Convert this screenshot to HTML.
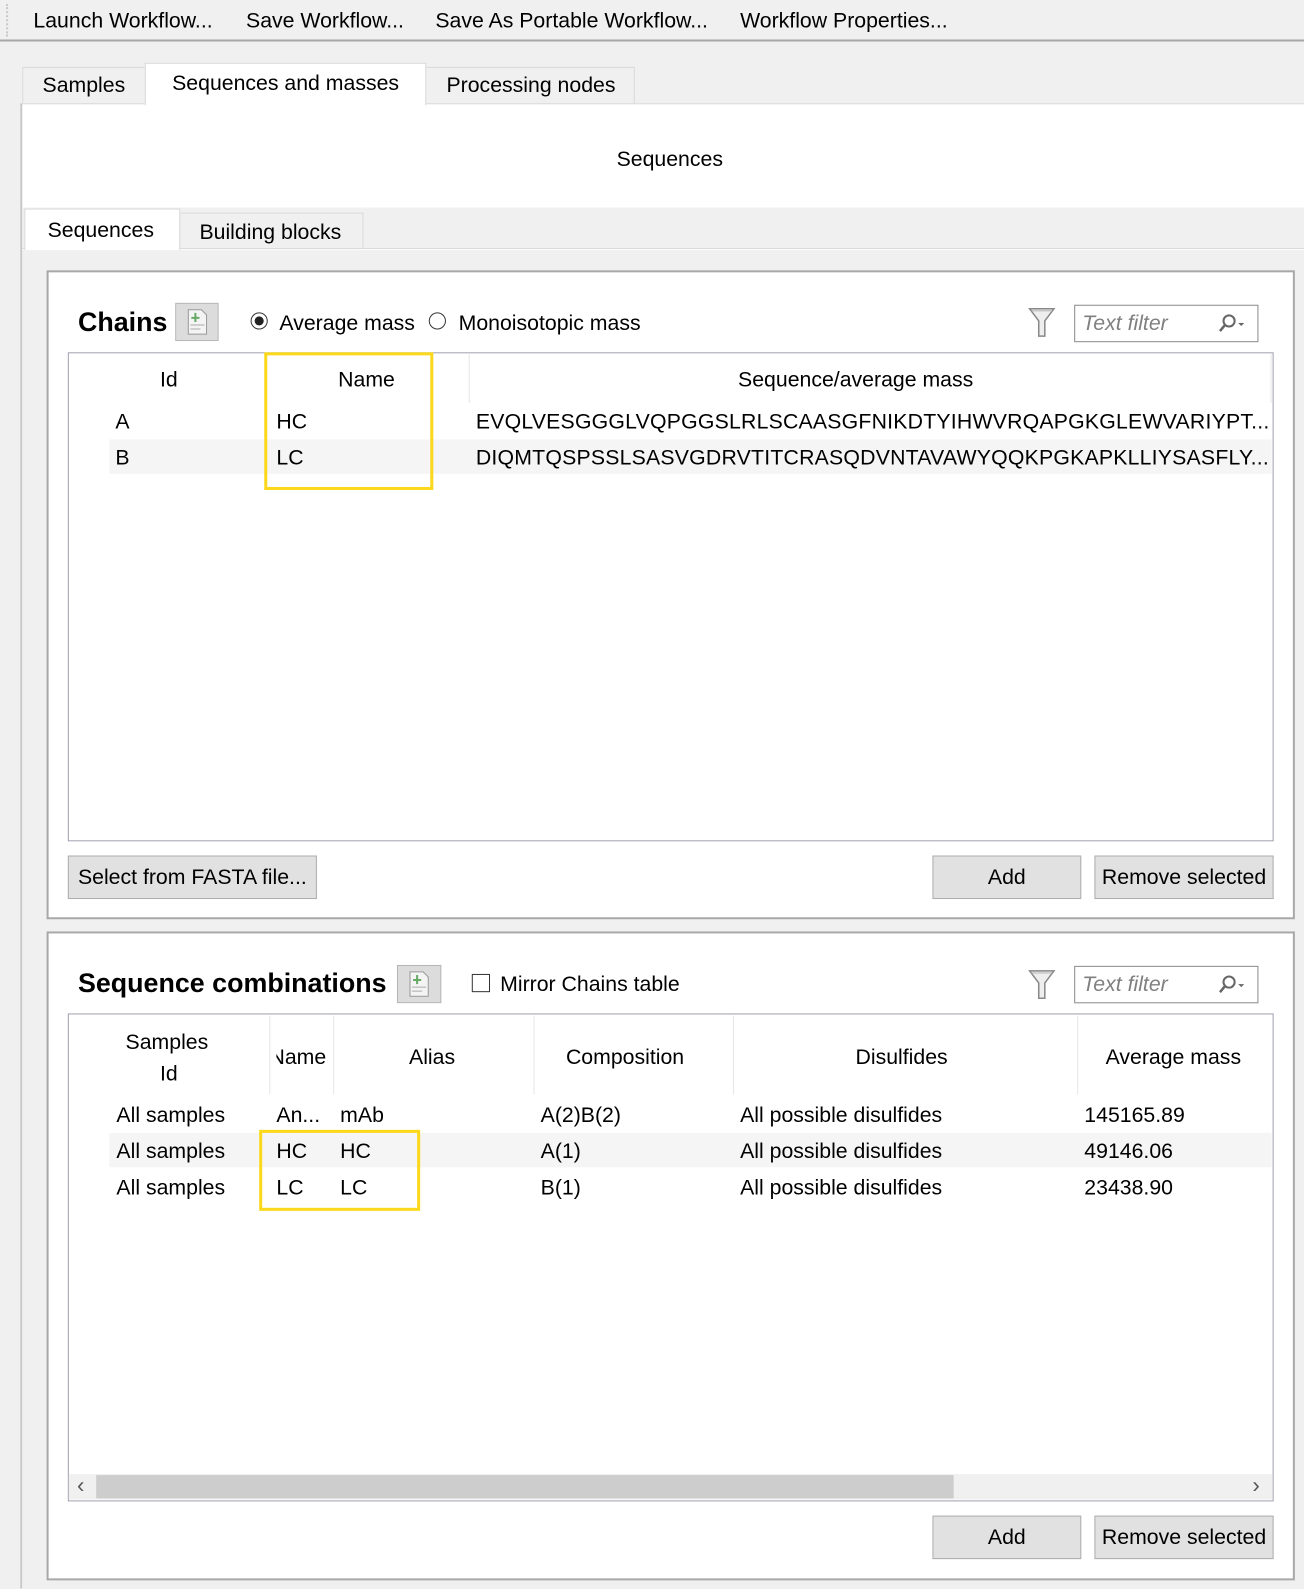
<!DOCTYPE html>
<html><head><meta charset="utf-8"><style>
*{box-sizing:border-box;margin:0;padding:0}
body{width:1304px;height:1588px;overflow:hidden;background:#f0f0f0;font-family:"Liberation Sans",sans-serif;color:#000}
#w{position:absolute;left:0;top:0;width:1288px;height:1569px;transform:scale(1.01242);transform-origin:0 0;background:#f0f0f0}
.a{position:absolute;white-space:nowrap}
.t{font-size:21px}
.btn{position:absolute;background:#e1e1e1;border:1px solid #adadad;font-size:21px;display:flex;align-items:center;justify-content:center}
.yb{position:absolute;border:3px solid #fbd81c}
.hs{position:absolute;width:1px;background:#e6e6e6}
.filt{position:absolute;background:#fff;border:1px solid #8a8a8a;width:182px;height:37px}
.filt span{position:absolute;left:7px;top:6px;font-style:italic;color:#808080;font-size:21px}
.bt{position:absolute;white-space:nowrap;font-size:26.5px;font-weight:bold}
</style></head><body><div id="w">
<div class="a" style="left:0;top:0;width:1288px;height:41px;border-bottom:2px solid #a8a8a8;background:#f0f0f0"></div>
<div class="a" style="left:6px;top:4px;width:2px;height:32px;border-left:2px dotted #c8c8c8"></div>
<div class="a t" style="left:33px;top:9px">Launch Workflow...</div>
<div class="a t" style="left:243px;top:9px">Save Workflow...</div>
<div class="a t" style="left:430px;top:9px">Save As Portable Workflow...</div>
<div class="a t" style="left:731px;top:9px">Workflow Properties...</div>
<div class="a" style="left:22px;top:66px;width:122px;height:37px;border:1px solid #d9d9d9;background:#f0f0f0"></div>
<div class="a t" style="left:42px;top:73px">Samples</div>
<div class="a" style="left:420px;top:66px;width:207px;height:37px;border:1px solid #d9d9d9;background:#f0f0f0"></div>
<div class="a t" style="left:441px;top:73px">Processing nodes</div>
<div class="a" style="left:20px;top:102px;width:1268px;height:1467px;background:#fff;border-left:2px solid #c8c8c8;border-top:1px solid #d9d9d9"></div>
<div class="a" style="left:143px;top:62px;width:278px;height:42px;background:#fff;border:1px solid #d9d9d9;border-bottom:none"></div>
<div class="a t" style="left:170px;top:71px">Sequences and masses</div>
<div class="a t" style="left:609px;top:146px">Sequences</div>
<div class="a" style="left:22px;top:205px;width:1266px;height:41px;background:#f0f0f0;border-bottom:1px solid #d9d9d9"></div>
<div class="a" style="left:177px;top:210px;width:182px;height:36px;border:1px solid #d9d9d9;background:#f0f0f0"></div>
<div class="a t" style="left:197px;top:218px">Building blocks</div>
<div class="a" style="left:24px;top:206px;width:154px;height:41px;background:#fff;border:1px solid #d9d9d9;border-bottom:none"></div>
<div class="a t" style="left:47px;top:216px">Sequences</div>
<div class="a" style="left:22px;top:247px;width:1266px;height:1322px;background:#f0f0f0"></div>
<div class="a" style="left:46px;top:267px;width:1233px;height:641px;background:#fff;border:2px solid #a8a8a8"></div>
<div class="bt" style="left:77px;top:303px">Chains</div>
<svg class="a" style="left:173px;top:299px" width="43" height="38"><rect x="0.5" y="0.5" width="42" height="37" fill="#dcdcdc" stroke="#b0b0b0"/><path d="M13 7h13l5 5v19H13z" fill="#f4f4f4" stroke="#999"/><path d="M20 10v9m-4-4h8" stroke="#6a6" stroke-width="2"/><path d="M15 22h14M15 26h10" stroke="#aaa"/></svg>
<svg class="a" style="left:246px;top:307px" width="20" height="20"><circle cx="10" cy="10" r="8" fill="#fff" stroke="#333"/><circle cx="10" cy="10" r="4.5" fill="#222"/></svg>
<div class="a t" style="left:276px;top:308px">Average mass</div>
<svg class="a" style="left:422px;top:307px" width="20" height="20"><circle cx="10" cy="10" r="8" fill="#fff" stroke="#333"/></svg>
<div class="a t" style="left:453px;top:308px">Monoisotopic mass</div>
<svg class="a" style="left:1015px;top:302px" width="28" height="33"><path d="M2 3h24l-9 12v15h-6V15z" fill="#eee" stroke="#888" stroke-width="1.5"/><path d="M4 5h20" stroke="#bbb"/></svg>
<div class="filt" style="left:1061px;top:301px"><span>Text filter</span><svg style="position:absolute;right:10px;top:8px" width="30" height="20"><circle cx="12" cy="7" r="5.5" fill="none" stroke="#666" stroke-width="2"/><path d="M8 11l-5 6" stroke="#666" stroke-width="2.5"/><path d="M21 9h6l-3 3z" fill="#666"/></svg></div>
<div class="a" style="left:67px;top:348px;width:1191px;height:483px;border:1px solid #a0a0b0;background:#fff"></div>
<div class="hs" style="left:463px;top:350px;height:48px"></div>
<div class="hs" style="left:1255px;top:350px;height:48px"></div>
<div class="a t" style="left:158px;top:364px">Id</div>
<div class="a t" style="left:334px;top:364px">Name</div>
<div class="a t" style="left:729px;top:364px">Sequence/average mass</div>
<div class="a" style="left:108px;top:434px;width:1148px;height:34px;background:#f5f5f5"></div>
<div class="a t" style="left:114px;top:405px">A</div>
<div class="a t" style="left:273px;top:405px">HC</div>
<div class="a t" style="left:470px;top:405px;letter-spacing:0.2px">EVQLVESGGGLVQPGGSLRLSCAASGFNIKDTYIHWVRQAPGKGLEWVARIYPT...</div>
<div class="a t" style="left:114px;top:441px">B</div>
<div class="a t" style="left:273px;top:441px">LC</div>
<div class="a t" style="left:470px;top:441px;letter-spacing:0.2px">DIQMTQSPSSLSASVGDRVTITCRASQDVNTAVAWYQQKPGKAPKLLIYSASFLY...</div>
<div class="yb" style="left:261px;top:348px;width:167px;height:136px"></div>
<div class="btn" style="left:67px;top:845px;width:246px;height:43px">Select from FASTA file...</div>
<div class="btn" style="left:921px;top:845px;width:147px;height:43px">Add</div>
<div class="btn" style="left:1081px;top:845px;width:177px;height:43px">Remove selected</div>
<div class="a" style="left:46px;top:920px;width:1233px;height:641px;background:#fff;border:2px solid #a8a8a8"></div>
<div class="bt" style="left:77px;top:956px">Sequence combinations</div>
<svg class="a" style="left:392px;top:953px" width="44" height="38"><rect x="0.5" y="0.5" width="43" height="37" fill="#dcdcdc" stroke="#b0b0b0"/><path d="M13 7h13l5 5v19H13z" fill="#f4f4f4" stroke="#999"/><path d="M20 10v9m-4-4h8" stroke="#6a6" stroke-width="2"/><path d="M15 22h14M15 26h10" stroke="#aaa"/></svg>
<div class="a" style="left:466px;top:962px;width:18px;height:18px;border:1.5px solid #333;background:#fff"></div>
<div class="a t" style="left:494px;top:961px">Mirror Chains table</div>
<svg class="a" style="left:1015px;top:956px" width="28" height="33"><path d="M2 3h24l-9 12v15h-6V15z" fill="#eee" stroke="#888" stroke-width="1.5"/><path d="M4 5h20" stroke="#bbb"/></svg>
<div class="filt" style="left:1061px;top:954px"><span>Text filter</span><svg style="position:absolute;right:10px;top:8px" width="30" height="20"><circle cx="12" cy="7" r="5.5" fill="none" stroke="#666" stroke-width="2"/><path d="M8 11l-5 6" stroke="#666" stroke-width="2.5"/><path d="M21 9h6l-3 3z" fill="#666"/></svg></div>
<div class="a" style="left:67px;top:1001px;width:1191px;height:482px;border:1px solid #a0a0b0;background:#fff"></div>
<div class="hs" style="left:266px;top:1003px;height:78px"></div>
<div class="hs" style="left:329px;top:1003px;height:78px"></div>
<div class="hs" style="left:527px;top:1003px;height:78px"></div>
<div class="hs" style="left:724px;top:1003px;height:78px"></div>
<div class="hs" style="left:1064px;top:1003px;height:78px"></div>
<div class="a t" style="left:124px;top:1018px">Samples</div>
<div class="a t" style="left:158px;top:1049px">Id</div>
<div class="a t" style="left:273px;top:1033px;width:50px;overflow:hidden;text-indent:-7px">Name</div>
<div class="a t" style="left:404px;top:1033px">Alias</div>
<div class="a t" style="left:559px;top:1033px">Composition</div>
<div class="a t" style="left:845px;top:1033px">Disulfides</div>
<div class="a t" style="left:1092px;top:1033px">Average mass</div>
<div class="a" style="left:108px;top:1119px;width:1148px;height:34px;background:#f5f5f5"></div>
<div class="a t" style="left:115px;top:1090px">All samples</div><div class="a t" style="left:273px;top:1090px">An...</div><div class="a t" style="left:336px;top:1090px">mAb</div><div class="a t" style="left:534px;top:1090px">A(2)B(2)</div><div class="a t" style="left:731px;top:1090px">All possible disulfides</div><div class="a t" style="left:1071px;top:1090px">145165.89</div>
<div class="a t" style="left:115px;top:1126px">All samples</div><div class="a t" style="left:273px;top:1126px">HC</div><div class="a t" style="left:336px;top:1126px">HC</div><div class="a t" style="left:534px;top:1126px">A(1)</div><div class="a t" style="left:731px;top:1126px">All possible disulfides</div><div class="a t" style="left:1071px;top:1126px">49146.06</div>
<div class="a t" style="left:115px;top:1162px">All samples</div><div class="a t" style="left:273px;top:1162px">LC</div><div class="a t" style="left:336px;top:1162px">LC</div><div class="a t" style="left:534px;top:1162px">B(1)</div><div class="a t" style="left:731px;top:1162px">All possible disulfides</div><div class="a t" style="left:1071px;top:1162px">23438.90</div>
<div class="yb" style="left:256px;top:1116px;width:159px;height:80px"></div>
<div class="a" style="left:68px;top:1456px;width:1189px;height:25px;background:#f0f0f0"></div>
<div class="a" style="left:95px;top:1457px;width:847px;height:23px;background:#cdcdcd"></div>
<div class="a" style="left:76px;top:1454px;font-size:22px;color:#555">&#8249;</div>
<div class="a" style="left:1237px;top:1454px;font-size:22px;color:#555">&#8250;</div>
<div class="btn" style="left:921px;top:1497px;width:147px;height:43px">Add</div>
<div class="btn" style="left:1081px;top:1497px;width:177px;height:43px">Remove selected</div>
</div></body></html>
